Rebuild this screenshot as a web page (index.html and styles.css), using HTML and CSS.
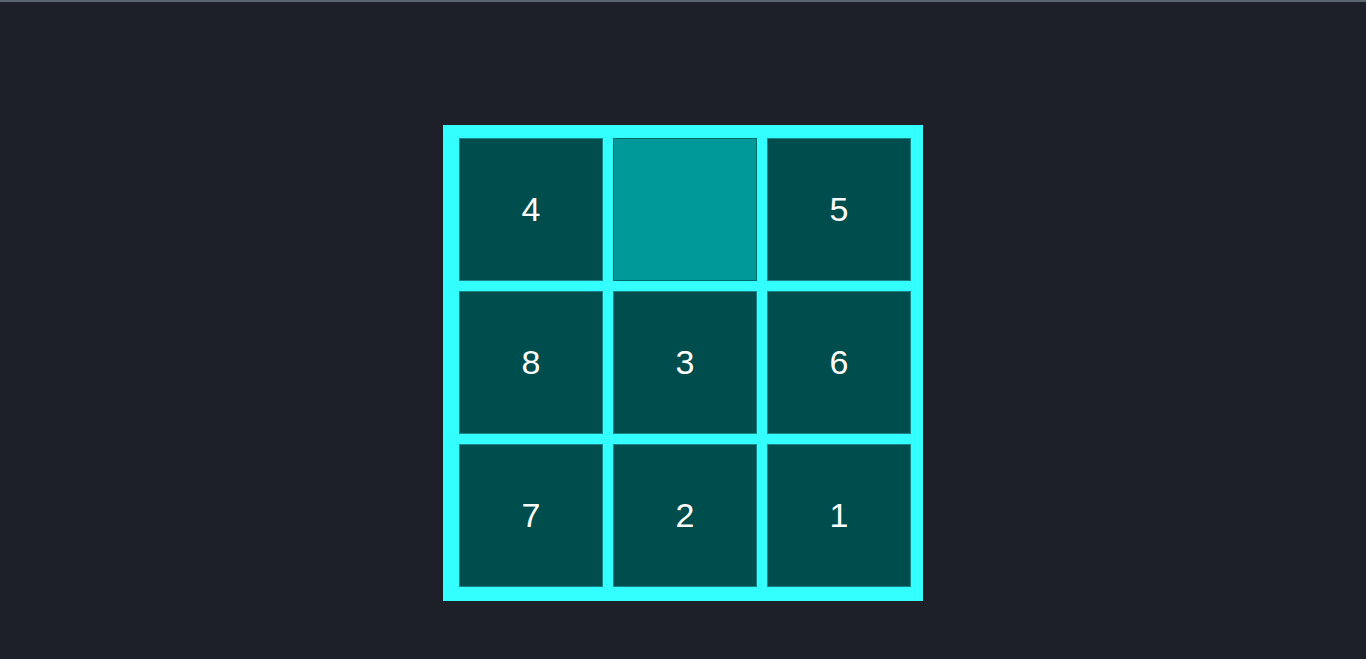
FILE: index.html
```html
<!DOCTYPE html>
<html lang="en">
<head>
<meta charset="utf-8">
<title>8 Puzzle</title>
<link rel="stylesheet" href="styles.css">
</head>
<body>
<main class="stage">
  <div class="board">
    <div class="tile">4</div>
    <div class="tile tile-empty"></div>
    <div class="tile">5</div>
    <div class="tile">8</div>
    <div class="tile">3</div>
    <div class="tile">6</div>
    <div class="tile">7</div>
    <div class="tile">2</div>
    <div class="tile">1</div>
  </div>
</main>
</body>
</html>
```

FILE: styles.css
```css
html, body {
  margin: 0;
  height: 100%;
}

body {
  background: #1e2029;
  border-top: 2px solid #5b6670;
  box-sizing: border-box;
  font-family: "Liberation Sans", Arial, sans-serif;
}

.stage {
  display: flex;
  justify-content: center;
  padding-top: 123px;
}

.board {
  display: grid;
  grid-template-columns: repeat(3, 144px);
  grid-template-rows: repeat(3, 143px);
  gap: 10px;
  padding: 13px 12px 14px 16px;
  background: #33ffff;
}

.tile {
  display: flex;
  align-items: center;
  justify-content: center;
  background: #004d4d;
  border: 1px solid #1a8585;
  color: #ffffff;
  font-size: 34px;
  line-height: 1;
  padding-bottom: 2px;
  box-sizing: border-box;
}

.tile-empty {
  background: #009999;
  border-color: #006a6a;
}
```
